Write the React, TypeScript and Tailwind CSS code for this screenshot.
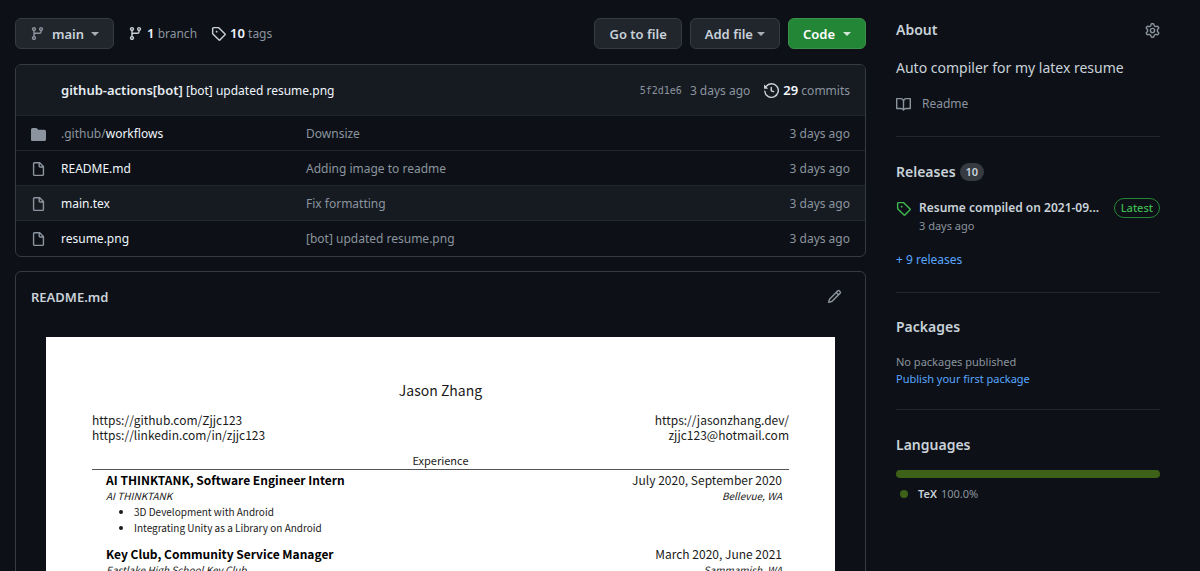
import type { ReactNode } from "react";
import clsx from "clsx";

const icons = {
  branch:
    "M11.75 2.5a.75.75 0 100 1.5.75.75 0 000-1.5zm-2.25.75a2.25 2.25 0 113 2.122V6A2.5 2.5 0 0110 8.5H6a1 1 0 00-1 1v1.128a2.251 2.251 0 11-1.5 0V5.372a2.25 2.25 0 111.5 0v1.836A2.492 2.492 0 016 7h4a1 1 0 001-1v-.628A2.25 2.25 0 019.5 3.25zM4.25 12a.75.75 0 100 1.5.75.75 0 000-1.5zM3.5 3.25a.75.75 0 111.5 0 .75.75 0 01-1.5 0z",
  tag: "M2.5 7.775V2.75a.25.25 0 01.25-.25h5.025a.25.25 0 01.177.073l6.25 6.25a.25.25 0 010 .354l-5.025 5.025a.25.25 0 01-.354 0l-6.25-6.25a.25.25 0 01-.073-.177zm-1.5 0V2.75C1 1.784 1.784 1 2.75 1h5.025c.464 0 .91.184 1.238.513l6.25 6.25a1.75 1.75 0 010 2.474l-5.026 5.026a1.75 1.75 0 01-2.474 0l-6.25-6.25A1.75 1.75 0 011 7.775zM6 5a1 1 0 100 2 1 1 0 000-2z",
  history:
    "M1.643 3.143L.427 1.927A.25.25 0 000 2.104V5.75c0 .138.112.25.25.25h3.646a.25.25 0 00.177-.427L2.715 4.215a6.5 6.5 0 11-1.18 4.458.75.75 0 10-1.493.154 8.001 8.001 0 101.6-5.684zM7.75 4a.75.75 0 01.75.75v2.992l2.028.812a.75.75 0 01-.557 1.392l-2.5-1A.75.75 0 017 8.25v-3.5A.75.75 0 017.75 4z",
  folder:
    "M1.75 1A1.75 1.75 0 000 2.75v10.5C0 14.216.784 15 1.75 15h12.5A1.75 1.75 0 0016 13.25v-8.5A1.75 1.75 0 0014.25 3h-6.5a.25.25 0 01-.2-.1l-.9-1.2c-.33-.44-.85-.7-1.4-.7h-3.5z",
  file: "M3.75 1.5a.25.25 0 00-.25.25v11.5c0 .138.112.25.25.25h8.5a.25.25 0 00.25-.25V6H9.75A1.75 1.75 0 018 4.25V1.5H3.75zm5.75.56v2.19c0 .138.112.25.25.25h2.19L9.5 2.06zM2 1.75C2 .784 2.784 0 3.75 0h5.086c.464 0 .909.184 1.237.513l3.414 3.414c.329.328.513.773.513 1.237v8.086A1.75 1.75 0 0112.25 15h-8.5A1.75 1.75 0 012 13.25V1.75z",
  pencil:
    "M11.013 1.427a1.75 1.75 0 012.474 0l1.086 1.086a1.75 1.75 0 010 2.474l-8.61 8.61c-.21.21-.47.364-.756.445l-3.251.93a.75.75 0 01-.927-.928l.929-3.25a1.75 1.75 0 01.445-.758l8.61-8.61zm1.414 1.06a.25.25 0 00-.354 0L10.811 3.75l1.439 1.44 1.263-1.263a.25.25 0 000-.354l-1.086-1.086zM11.189 6.25L9.75 4.81l-6.286 6.287a.25.25 0 00-.064.108l-.558 1.953 1.953-.558a.249.249 0 00.108-.064l6.286-6.286z",
  book: "M0 1.75A.75.75 0 01.75 1h4.253c1.227 0 2.317.59 3 1.501A3.744 3.744 0 0111.006 1h4.245a.75.75 0 01.75.75v10.5a.75.75 0 01-.75.75h-4.507a2.25 2.25 0 00-1.591.659l-.622.621a.75.75 0 01-1.06 0l-.622-.621A2.25 2.25 0 005.258 13H.75a.75.75 0 01-.75-.75V1.75zm8.755 3a2.25 2.25 0 012.25-2.25H14.5v9h-3.757c-.71 0-1.4.201-1.992.572l.004-7.322zm-1.504 7.324l.004-5.073-.002-2.253A2.25 2.25 0 005.003 2.5H1.5v9h3.757a3.75 3.75 0 011.994.574z",
  gear: "M7.429 1.525a6.593 6.593 0 011.142 0c.036.003.108.036.137.146l.289 1.105c.147.56.55.967.997 1.189.174.086.341.183.501.29.417.278.97.423 1.53.27l1.102-.303c.11-.03.175.016.195.046.219.31.41.641.573.989.014.031.022.11-.059.19l-.815.806c-.411.406-.562.957-.53 1.456a4.588 4.588 0 010 .582c-.032.499.119 1.05.53 1.456l.815.806c.08.08.073.159.059.19a6.494 6.494 0 01-.573.99c-.02.029-.086.074-.195.045l-1.103-.303c-.559-.153-1.112-.008-1.529.27-.16.107-.327.204-.5.29-.449.222-.851.628-.998 1.189l-.289 1.105c-.029.11-.101.143-.137.146a6.613 6.613 0 01-1.142 0c-.036-.003-.108-.037-.137-.146l-.289-1.105c-.147-.56-.55-.967-.997-1.189a4.502 4.502 0 01-.501-.29c-.417-.278-.97-.423-1.53-.27l-1.102.303c-.11.03-.175-.016-.195-.046a6.492 6.492 0 01-.573-.989c-.014-.031-.022-.11.059-.19l.815-.806c.411-.406.562-.957.53-1.456a4.587 4.587 0 010-.582c.032-.499-.119-1.05-.53-1.456l-.815-.806c-.08-.08-.073-.159-.059-.19a6.44 6.44 0 01.573-.99c.02-.029.086-.075.195-.045l1.103.303c.559.153 1.112.008 1.529-.27.16-.107.327-.204.5-.29.449-.222.851-.628.998-1.189l.289-1.105c.029-.11.101-.143.137-.146zM8 0c-.236 0-.47.01-.701.03-.743.065-1.29.615-1.458 1.261l-.29 1.106c-.017.066-.078.158-.211.224a5.994 5.994 0 00-.668.386c-.123.082-.233.09-.3.071L3.27 2.776c-.644-.177-1.392.02-1.82.63a7.977 7.977 0 00-.704 1.217c-.315.675-.111 1.422.363 1.891l.815.806c.05.048.098.147.088.294a6.084 6.084 0 000 .772c.01.147-.038.246-.088.294l-.815.806c-.474.469-.678 1.216-.363 1.891.2.428.436.835.704 1.218.428.609 1.176.806 1.82.63l1.103-.303c.066-.019.176-.011.299.071.213.143.436.272.668.386.133.066.194.158.212.224l.289 1.106c.169.646.715 1.196 1.458 1.26a8.094 8.094 0 001.402 0c.743-.064 1.29-.614 1.458-1.26l.29-1.106c.017-.066.078-.158.211-.224a5.98 5.98 0 00.668-.386c.123-.082.233-.09.3-.071l1.102.302c.644.177 1.392-.02 1.82-.63.268-.382.505-.789.704-1.217.315-.675.111-1.422-.364-1.891l-.814-.806c-.05-.048-.098-.147-.088-.294a6.1 6.1 0 000-.772c-.01-.147.039-.246.088-.294l.814-.806c.475-.469.679-1.216.364-1.891a7.992 7.992 0 00-.704-1.218c-.428-.609-1.176-.806-1.82-.63l-1.103.303c-.066.019-.176.011-.299-.071a5.991 5.991 0 00-.668-.386c-.133-.066-.194-.158-.212-.224L10.16 1.29C9.99.645 9.444.095 8.701.031A8.094 8.094 0 008 0zm1.5 8a1.5 1.5 0 11-3 0 1.5 1.5 0 013 0zM11 8a3 3 0 11-6 0 3 3 0 016 0z",
};

function Icon({ name, className }: { name: keyof typeof icons; className?: string }) {
  return (
    <svg viewBox="0 0 16 16" className={clsx("size-[15px] shrink-0 fill-current", className)} aria-hidden="true">
      <path fillRule="evenodd" d={icons[name]} />
    </svg>
  );
}

function Caret() {
  return (
    <svg viewBox="0 0 8 4" className="mt-px h-1 w-2 fill-current opacity-80" aria-hidden="true">
      <path d="M0 0h8L4 4z" />
    </svg>
  );
}

function Button({ children, className }: { children: ReactNode; className: string }) {
  return (
    <button
      type="button"
      className={clsx("flex h-[31px] items-center rounded-md border px-[14px] text-[13px] font-semibold", className)}
    >
      {children}
    </button>
  );
}

const gray = "border-[#363b42] bg-[#21262d] text-[#c9d1d9]";

const files = [
  { dir: ".github/", name: "workflows", message: "Downsize" },
  { name: "README.md", message: "Adding image to readme" },
  { name: "main.tex", message: "Fix formatting", active: true },
  { name: "resume.png", message: "[bot] updated resume.png" },
];

const jobs = [
  {
    title: "AI THINKTANK, Software Engineer Intern",
    org: "AI THINKTANK",
    dates: "July 2020, September 2020",
    place: "Bellevue, WA",
    points: ["3D Development with Android", "Integrating Unity as a Library on Android"],
  },
  {
    title: "Key Club, Community Service Manager",
    org: "Eastlake High School Key Club",
    dates: "March 2020, June 2021",
    place: "Sammamish, WA",
    points: [],
  },
];

function Stat({ icon, count, label }: { icon: keyof typeof icons; count: number; label: string }) {
  return (
    <a href={`#${label}`} className="ml-[14px] flex items-center gap-1 text-[#8b949e]">
      <Icon name={icon} className="text-[#c9d1d9]" />
      <span>
        <strong className="text-[13px] font-semibold text-[#f0f6fc]">{count}</strong> {label}
      </span>
    </a>
  );
}

function Toolbar() {
  return (
    <div className="flex items-center">
      <Button className={clsx("gap-[7px]", gray)}>
        <Icon name="branch" className="text-[#8b949e]" />
        main
        <Caret />
      </Button>
      <Stat icon="branch" count={1} label="branch" />
      <Stat icon="tag" count={10} label="tags" />
      <div className="ml-auto flex gap-2">
        <Button className={gray}>Go to file</Button>
        <Button className={clsx("gap-1", gray)}>
          Add file
          <Caret />
        </Button>
        <Button className="gap-2 border-[#3a9149] bg-[#238636] text-white">
          Code
          <Caret />
        </Button>
      </div>
    </div>
  );
}

function FileList() {
  return (
    <div className="mt-[15px] overflow-hidden rounded-md border border-[#363b42]">
      <div className="flex h-[50px] items-center bg-[#161b22] pr-[15px] pl-[45px]">
        <p className="text-[#f0f6fc]">
          <a href="#bot" className="text-[13px] font-semibold text-[#e6edf3]">
            github-actions[bot]
          </a>{" "}
          <a href="#commit">[bot] updated resume.png</a>
        </p>
        <a href="#sha" className="mt-px ml-auto font-['DejaVu_Sans_Mono',monospace] text-[10px] text-[#8b949e]">
          5f2d1e6
        </a>
        <span className="mt-px ml-2 text-[#8b949e]">3 days ago</span>
        <Stat icon="history" count={29} label="commits" />
      </div>
      <table className="w-full table-fixed text-left text-[#8b949e]">
        <tbody>
          {files.map((file) => (
            <tr key={file.name} className={clsx("h-[35px] border-t border-[#21262d]", file.active && "bg-[#161b22]")}>
              <td className="w-[45px] pt-0.5 pl-[15px]">
                <Icon name={file.dir ? "folder" : "file"} />
              </td>
              <td className="w-[245px] pt-0.5">
                <a href={`#${file.name}`}>
                  {file.dir}
                  <span className="text-[#f0f6fc]">{file.name}</span>
                </a>
              </td>
              <td className="pt-0.5">{file.message}</td>
              <td className="w-32 pt-0.5 pr-[15px] text-right">3 days ago</td>
            </tr>
          ))}
        </tbody>
      </table>
    </div>
  );
}

function Resume() {
  return (
    <article className="bg-white px-[46px] pt-[41px] pb-12 font-['Noto_Sans_CJK_SC',sans-serif] text-[12px] leading-4 text-[#1a1a1a]">
      <h2 className="text-center text-[14px] leading-6">Jason Zhang</h2>
      <div className="mt-[10px] flex justify-between leading-[15px]">
        <p>
          https://github.com/Zjjc123
          <br />
          https://linkedin.com/in/zjjc123
        </p>
        <p className="text-right">
          https://jasonzhang.dev/
          <br />
          zjjc123@hotmail.com
        </p>
      </div>
      <h3 className="mt-[10px] border-b border-[#555] pb-px text-center text-[11px]">Experience</h3>
      {jobs.map((job) => (
        <section key={job.title} className="mt-0.5 mb-[10px] flex justify-between pr-[7px] pl-[14px]">
          <div>
            <h4 className="font-bold text-black">{job.title}</h4>
            <p className="text-[10px] italic">{job.org}</p>
            <ul className="list-disc pl-7 text-[10px]">
              {job.points.map((point) => (
                <li key={point}>{point}</li>
              ))}
            </ul>
          </div>
          <div className="text-right">
            <p>{job.dates}</p>
            <p className="text-[10px] italic">{job.place}</p>
          </div>
        </section>
      ))}
    </article>
  );
}

function Sidebar() {
  return (
    <aside className="w-[264px] shrink-0 text-[#c9d1d9]">
      <section className="border-b border-[#21262d] pb-[22px]">
        <div className="flex items-center justify-between">
          <h2 className="text-[14px] leading-6 font-semibold">About</h2>
          <button type="button" aria-label="Edit repository details" className="text-[#8b949e]">
            <Icon name="gear" />
          </button>
        </div>
        <p className="mt-[14px] text-[14px] leading-6">Auto compiler for my latex resume</p>
        <a href="#readme" className="mt-[14px] flex items-center gap-[11px] text-[#8b949e]">
          <Icon name="book" />
          Readme
        </a>
      </section>

      <section className="border-b border-[#21262d] pt-[23px] pb-[22px]">
        <h2 className="flex items-center gap-1 text-[14px] leading-6 font-semibold">
          Releases
          <span className="rounded-full bg-[#363b43] px-[6px] text-[11px] leading-[18px]">10</span>
        </h2>
        <div className="mt-[14px] flex gap-2">
          <Icon name="tag" className="mt-[3px] text-[#3fb950]" />
          <div className="flex-1">
            <div className="flex items-center justify-between">
              <a href="#release" className="font-semibold whitespace-nowrap">
                Resume compiled on 2021-09...
              </a>
              <span className="rounded-full border border-[#238636] px-[6px] text-[11px] leading-[18px] font-medium text-[#3fb950]">
                Latest
              </span>
            </div>
            <p className="text-[11px] leading-4 text-[#8b949e]">3 days ago</p>
          </div>
        </div>
        <a href="#releases" className="mt-4 block text-[#58a6ff]">
          + 9 releases
        </a>
      </section>

      <section className="border-b border-[#21262d] pt-[22px] pb-[22px] text-[11px] leading-[17px]">
        <h2 className="text-[14px] leading-6 font-semibold">Packages</h2>
        <p className="mt-[14px] text-[#8b949e]">No packages published</p>
        <a href="#publish" className="text-[#58a6ff]">
          Publish your first package
        </a>
      </section>

      <section className="pt-[23px] text-[11px]">
        <h2 className="text-[14px] leading-6 font-semibold">Languages</h2>
        <div className="mt-[13px] h-2 rounded-full bg-[#3d6117]" />
        <p className="mt-[6px] flex items-center pl-1">
          <span className="mr-[10px] size-2 rounded-full bg-[#3d6117]" />
          <strong className="mr-1 font-semibold">TeX</strong>
          <span className="text-[#8b949e]">100.0%</span>
        </p>
      </section>
    </aside>
  );
}

export default function App() {
  return (
    <div className="flex min-h-screen gap-[30px] bg-[#0d1117] pt-[18px] pr-10 pl-[15px] font-['Noto_Sans',sans-serif] text-[12px] leading-5 text-[#c9d1d9]">
      <main className="min-w-0 flex-1">
        <Toolbar />
        <FileList />
        <div className="mt-[14px] rounded-md border border-[#363b42] px-[30px] pb-[30px]">
          <div className="-mx-[15px] flex h-[50px] items-center justify-between">
            <h2 className="text-[13px] font-semibold">README.md</h2>
            <button type="button" aria-label="Edit README" className="mr-2 text-[#8b949e]">
              <Icon name="pencil" />
            </button>
          </div>
          <div className="pt-[15px]">
            <Resume />
          </div>
        </div>
      </main>
      <Sidebar />
    </div>
  );
}
